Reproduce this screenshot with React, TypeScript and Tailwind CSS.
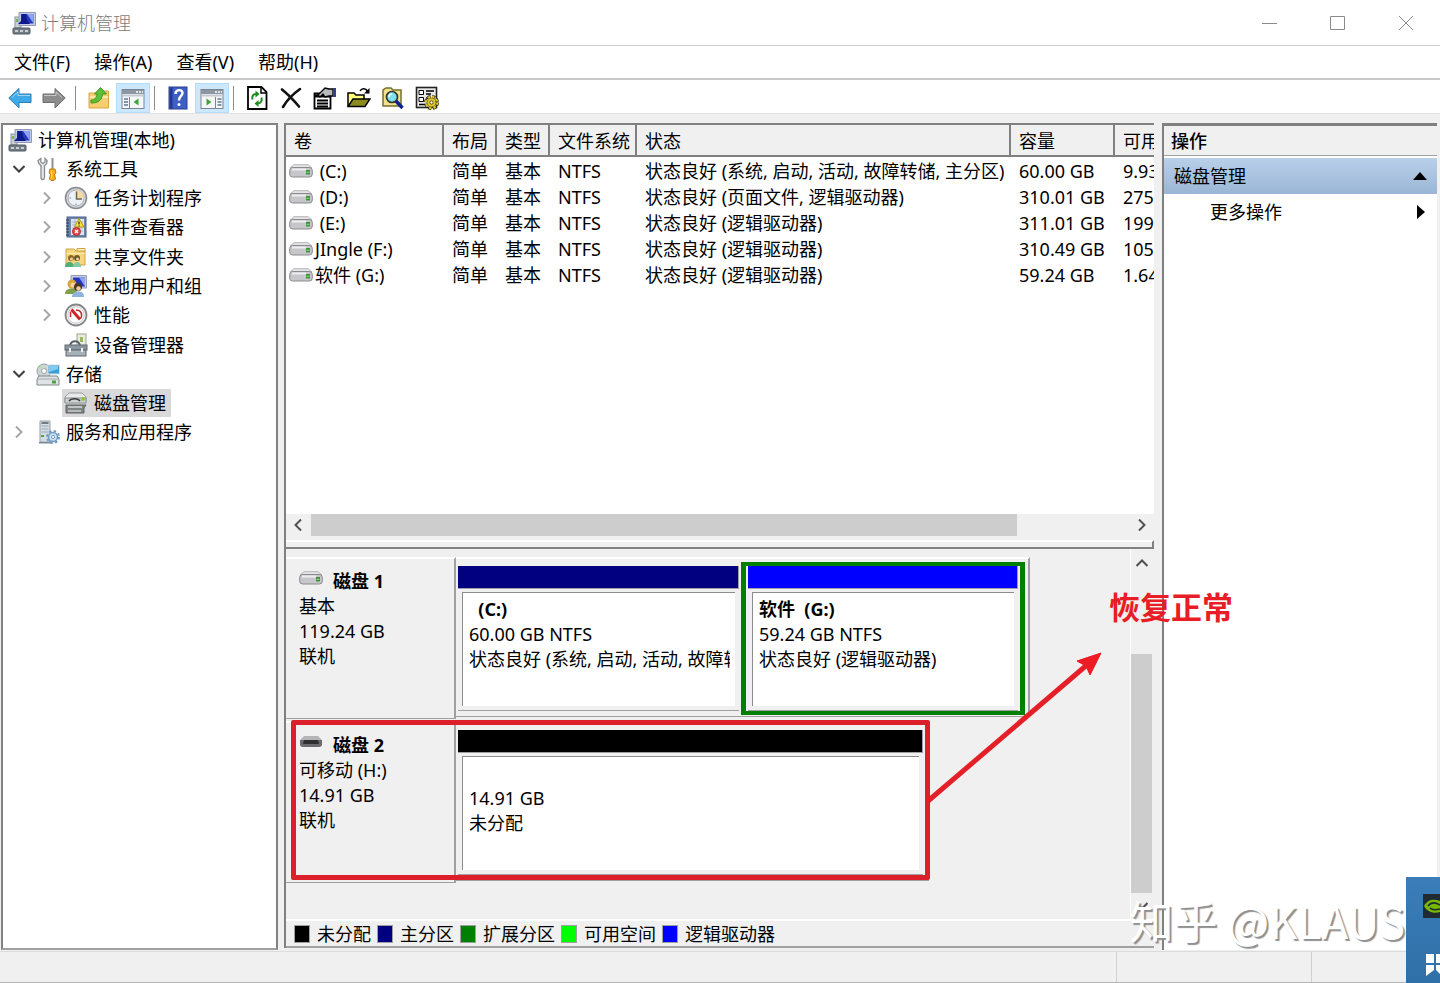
import { ReactNode } from "react";
import clsx from "clsx";

type IconProps = {
    className?: string;
};

type TreeNode = {
    title: string;
    level: 0 | 1 | 2;
    icon: ReactNode;
    open?: boolean;
    leaf?: boolean;
    selected?: boolean;
};

type Volume = {
    name: string;
    layout: string;
    type: string;
    fs: string;
    status: string;
    capacity: string;
    free: string;
};

function ComputerIcon({ className = "size-6" }: IconProps) {
    return (
        <svg viewBox="0 0 24 24" className={className}>
            <rect x="3" y="6" width="6" height="11" fill="#c9d0d8" stroke="#8a939c" />
            <rect x="4" y="8" width="2" height="3" fill="#7db34a" />
            <path d="M7 1.500h16.500v13H7z" fill="#c3cbe0" stroke="#8f9bb5" />
            <path d="M9 3h12.500v9.500H9z" fill="#2537c4" />
            <path d="M15 3h6.500v9.500z" fill="#8fa2ee" />
            <path d="M10 3h4l1 6 3 4H6l3-3z" fill="#0d1a87" />
            <rect x="1" y="17" width="17" height="6" rx="1" fill="#737d85" stroke="#535b62" />
            <path d="M3 19h3v2H3zM8 19h3v2H8zM13 19h3v2h-3z" fill="#c7cdd2" />
        </svg>
    );
}

function ToolsIcon() {
    return (
        <svg viewBox="0 0 24 24" className="size-6">
            <path
                d="M2 3.500C2.300 6.500 3 7.500 5 8.500v12q0 2 1.700 2t1.800-2v-12c2-1 2.700-2.500 2.500-5L9 1.500V5L7 6.500 4.800 5V1.500z"
                fill="#e6e8ea"
                stroke="#878c91"
                strokeWidth="1.300"
            />
            <path d="M16.500 1v12" stroke="#8d9297" strokeWidth="2" />
            <path d="M14 12h5l1 4-1.500 1 1 5-1.500 1.500h-3L13.500 22l1-5-1.500-1z" fill="#f5ae1c" stroke="#c07d06" />
            <path d="M15.500 14v7" stroke="#ffe08a" />
        </svg>
    );
}

function ClockIcon() {
    return (
        <svg viewBox="0 0 24 24" className="size-6">
            <circle cx="12" cy="12" r="10.500" fill="#d4d7dc" stroke="#85898f" strokeWidth="1.500" />
            <circle cx="12" cy="12" r="8" fill="#eef2f8" stroke="#a9afb6" />
            <path d="M12 4a8 8 0 0 1 8 8h-8z" fill="#f5dca4" />
            <path d="M12.500 5.500V13H18" fill="none" stroke="#6b6350" strokeWidth="1.500" />
            <path d="M5.500 12h1.500M12 17.500V19" stroke="#7f858c" />
        </svg>
    );
}

function EventIcon() {
    return (
        <svg viewBox="0 0 24 24" className="size-6">
            <rect x="3" y="2" width="19" height="20" fill="#6d86ab" stroke="#4d6388" />
            <rect x="7" y="4" width="13" height="16" fill="#dce5f0" />
            <path d="M8 7h11M8 10h11M8 13h11M8 16h11M11 4v16" stroke="#a5b5cb" />
            <path d="M2 5h3M2 8h3M2 11h3M2 14h3M2 17h3M2 20h3" stroke="#27364f" />
            <path d="M15 3.500l5 8.500H10.500z" fill="#ffe03e" stroke="#b99a06" />
            <path d="M15 6.500v3M15 10.500v1" stroke="#333" strokeWidth="1.300" />
            <circle cx="12.500" cy="16.500" r="4" fill="#de4a4a" stroke="#b72c2c" />
            <path d="M11 15l3 3M14 15l-3 3" stroke="#fff" strokeWidth="1.300" />
        </svg>
    );
}

function SharedIcon() {
    return (
        <svg viewBox="0 0 24 24" className="size-6">
            <path d="M2 4h8l2 2h9v14H2z" fill="#f7d67c" stroke="#d0a341" />
            <path d="M13 3.500h8V6h-8z" fill="#fff3c4" stroke="#d0a341" />
            <path d="M2.500 8.500h18" stroke="#fdeab3" />
            <circle cx="7" cy="13" r="3" fill="#8a6a2d" />
            <circle cx="13" cy="13" r="3" fill="#6d5426" />
            <circle cx="7.500" cy="14" r="1.500" fill="#f3cf9c" />
            <circle cx="13.500" cy="14" r="1.500" fill="#f3cf9c" />
            <path d="M1 22c0-4 2.500-5 5-5s4 2 4 5z" fill="#4fae77" />
            <path d="M9 22c0-3 2-5 4-5s4 1.500 4 5z" fill="#83c9a6" />
        </svg>
    );
}

function UsersIcon() {
    return (
        <svg viewBox="0 0 24 24" className="size-6">
            <path d="M7 1.500h15.500v12.500H7z" fill="#c6cee0" stroke="#929db6" />
            <path d="M9 3.500h12v9H9z" fill="#2436c0" />
            <path d="M15 3.500h6v9z" fill="#8fa4ee" />
            <circle cx="8" cy="10" r="4.500" fill="#d8a53a" />
            <circle cx="9" cy="11" r="2.500" fill="#f4d4a2" />
            <path d="M1 20c0-4 3-5.500 7-5.500s5 2 5 5.500z" fill="#7ea04b" />
            <circle cx="14" cy="13" r="4" fill="#4a3624" />
            <circle cx="14.500" cy="14.500" r="2.300" fill="#f0cb9c" />
            <path d="M8 23c0-4 3-5.500 6.500-5.500S20 19 20 23z" fill="#8eb4dc" />
        </svg>
    );
}

function PerformanceIcon() {
    return (
        <svg viewBox="0 0 24 24" className="size-6">
            <circle cx="12" cy="12" r="10.500" fill="#fafafa" stroke="#84868a" strokeWidth="1.800" />
            <circle cx="12" cy="12" r="8.200" fill="#fff" stroke="#c4c6c9" />
            <path d="M6.500 14V8.500" fill="none" stroke="#cf2222" strokeWidth="1.500" />
            <path d="M7.500 6.500L16 16.500" stroke="#cf2222" strokeWidth="2.800" />
            <path d="M12 7c5 0 7 4 4.500 9" fill="none" stroke="#cf2222" strokeWidth="1.500" />
        </svg>
    );
}

function DeviceIcon() {
    return (
        <svg viewBox="0 0 24 24" className="size-6">
            <rect x="13" y="1" width="9" height="14" fill="#e9ecdf" stroke="#9fa58f" />
            <rect x="16" y="4" width="3" height="5" fill="#9cb85f" />
            <path d="M6 12c2-5 8-5 10 0" fill="none" stroke="#566069" strokeWidth="2" />
            <rect x="1" y="12" width="22" height="5" fill="#8c969f" stroke="#5e6870" />
            <rect x="2" y="17" width="20" height="6" fill="#a8b0b8" stroke="#5e6870" />
            <path d="M6 15v4M18 15v4" stroke="#eef0f2" strokeWidth="2" />
        </svg>
    );
}

function StorageIcon() {
    return (
        <svg viewBox="0 0 24 24" className="size-6">
            <circle cx="8" cy="9" r="7" fill="#cfd4d6" stroke="#969da1" />
            <circle cx="8" cy="9" r="2.500" fill="#fff" stroke="#9aa1a5" />
            <path d="M4 4l3 3" stroke="#b9e0a2" strokeWidth="2" />
            <rect x="12" y="3" width="11.500" height="9" fill="#3d9ed6" stroke="#d9dfe3" />
            <path d="M13 4h9v3l-9 3z" fill="#82cbee" />
            <path d="M3 14h18l2 3v6H1v-6z" fill="#dfe3e5" stroke="#7f878b" />
            <path d="M1 17h22" stroke="#9fa6aa" />
            <rect x="16" y="18.500" width="4" height="3" fill="#4ba33b" />
        </svg>
    );
}

function DiskManageIcon() {
    return (
        <svg viewBox="0 0 24 24" className="size-6">
            <path d="M5 2h13l4 4v5H1V6z" fill="#e8eaea" stroke="#9b9f9f" />
            <path d="M1 7h21v5H1z" fill="#cfd2d2" stroke="#8b8f8f" />
            <path d="M5 10c2-3 9-3 11 0" fill="none" stroke="#3a3d3d" strokeWidth="1.500" />
            <circle cx="19" cy="8" r="2" fill="#8fc43f" />
            <path d="M2 14h20l-2 3v5H2z" fill="#7f8484" stroke="#5d6161" />
            <path d="M4 16h14" stroke="#d7dada" strokeWidth="1.500" />
            <rect x="4" y="19" width="13" height="2" fill="#b7bbbb" />
        </svg>
    );
}

function ServiceIcon() {
    return (
        <svg viewBox="0 0 24 24" className="size-6">
            <path d="M4 1h10v21H4z" fill="#d5dde4" stroke="#93a0ab" />
            <path d="M5.500 3h7" stroke="#4f5b66" strokeWidth="1.500" />
            <path d="M5.500 6h7M5.500 9h7M5.500 12h7" stroke="#9aa7b2" />
            <rect x="5" y="15" width="3" height="2" fill="#56a04c" />
            <path d="M3 22h12v1.500H3z" fill="#7d8a95" />
            <circle cx="17" cy="17" r="4.500" fill="#cfe0ef" stroke="#6f9cc4" strokeWidth="1.500" />
            <circle cx="17" cy="17" r="6" fill="none" stroke="#6f9cc4" strokeWidth="2" strokeDasharray="2.400 2.312" />
            <circle cx="17" cy="17" r="1.600" fill="#fff" stroke="#6f9cc4" />
        </svg>
    );
}

function DriveIcon() {
    return (
        <svg viewBox="0 0 24 14" className="h-[14px] w-6 shrink-0">
            <path d="M5 .7h14l4 3.300H1z" fill="#e4e4e6" stroke="#b5b5b8" />
            <rect x=".7" y="3.500" width="22.600" height="9.500" rx="3" fill="#c7c7cb" stroke="#8a8a8e" />
            <path d="M3 5.500h14" stroke="#ededf0" strokeWidth="2" />
            <rect x="17" y="6" width="4" height="4.500" fill="#3f9142" />
            <path d="M17.500 8.300h3" stroke="#9bdc8c" />
        </svg>
    );
}

function RemovableIcon() {
    return (
        <svg viewBox="0 0 24 14" className="h-[14px] w-6 shrink-0">
            <path d="M5 1h14l4 4v4q0 2-2 2H3q-2 0-2-2V5z" fill="#b5b5b7" />
            <path d="M1 5h22v4q0 3-3 3H4q-3 0-3-3z" fill="#6b6b6e" />
            <path d="M5 5h14l1 4H4z" fill="#2f2f31" />
        </svg>
    );
}

function ArrowIcon({ fill, stroke, flip }: { fill: string; stroke: string; flip?: boolean }) {
    return (
        <svg viewBox="0 0 24 24" className={clsx("size-6", flip && "-scale-x-100")}>
            <path d="M.8 12L11 2.500V8h12v8.500H11V22z" fill={fill} stroke={stroke} />
            <path d="M4 11.500L10 6v3.500h12" fill="none" stroke="#fff" strokeOpacity=".5" />
        </svg>
    );
}

function UpFolderIcon() {
    return (
        <svg viewBox="0 0 24 24" className="size-6">
            <path d="M2 7h8l2-2h9.500v17H2z" fill="#f6cd70" stroke="#dca544" />
            <path d="M3 11h18" stroke="#fde7ae" strokeWidth="2" />
            <path d="M4 14c4 0 5.500-2.500 6-6H7.500l6-6.500 6 6.500h-4c-.5 6-4 9-11.500 9z" fill="#5cbf3a" stroke="#3d9722" />
        </svg>
    );
}

function PaneIcon({ right }: { right?: boolean }) {
    return (
        <svg viewBox="0 0 24 24" className="size-6">
            <rect x="1" y="3.500" width="22" height="19" fill="#f5f6f7" stroke="#7b858f" />
            <path d="M1 4h22v4H1z" fill="#8d97a1" />
            <path d="M15 6h2M18 6h2M21 6h1" stroke="#fff" strokeWidth="1.500" />
            <path d="M1.500 9.500h21" stroke="#c5cad0" strokeWidth="2" />
            {right ? (
                <>
                    <path d="M15.500 11v11" stroke="#7b858f" />
                    <path d="M17.500 13h4M17.500 16h4M17.500 19h4" stroke="#5b7896" strokeWidth="1.500" />
                    <path d="M6.500 12.500v7l5-3.500z" fill="#3ea33a" />
                </>
            ) : (
                <>
                    <path d="M8.500 11v11" stroke="#7b858f" />
                    <path d="M3 13h4M3 16h4M3 19h4" stroke="#5b7896" strokeWidth="1.500" />
                    <path d="M17.500 12.500v7l-5-3.500z" fill="#3ea33a" />
                </>
            )}
        </svg>
    );
}

function HelpIcon() {
    return (
        <svg viewBox="0 0 24 24" className="size-6">
            <rect x="3" y="1" width="18" height="22" fill="#3f5fc4" stroke="#2a3f8f" />
            <path d="M4 1.500h2.500v21H4z" fill="#24398d" />
            <path
                d="M9.500 8c0-5 7-5 7-1 0 3-3.500 3-3.500 7.500"
                fill="none"
                stroke="#fff"
                strokeWidth="2.400"
            />
            <circle cx="13" cy="18.500" r="1.500" fill="#fff" />
        </svg>
    );
}

function RefreshIcon() {
    return (
        <svg viewBox="0 0 24 24" className="size-6">
            <path d="M3 1h13.500L21.500 6v17H3z" fill="#fff" stroke="#000" strokeWidth="1.800" />
            <path d="M16 1v6h5.500" fill="none" stroke="#000" strokeWidth="1.500" />
            <path d="M7.500 13.500c-1-3.500 1-5.500 3.500-5.500" fill="none" stroke="#1c8a1c" strokeWidth="2" />
            <path d="M10.500 4.500l4 3.500-4 3.500z" fill="#1c8a1c" />
            <path d="M16.500 11.500c1 3.500-1 6-3.500 6" fill="none" stroke="#1c8a1c" strokeWidth="2" />
            <path d="M13.500 14l-4 3.500 4 3.500z" fill="#1c8a1c" />
        </svg>
    );
}

function DeleteIcon() {
    return (
        <svg viewBox="0 0 24 24" className="size-6">
            <path d="M3 3.500c5 4 11 10 17 17M21 3C14 8 8 14 4 21" fill="none" stroke="#111" strokeWidth="2.600" strokeLinecap="round" />
        </svg>
    );
}

function PropertiesIcon() {
    return (
        <svg viewBox="0 0 24 24" className="size-6">
            <path d="M1.500 7.500h16v15h-16z" fill="#fff" stroke="#000" strokeWidth="1.800" />
            <path d="M2 8.500h15v3H2z" fill="#000" />
            <path d="M4 14.500h11M4 17.500h11M4 20.500h11" stroke="#000" strokeWidth="2" />
            <path d="M5 9l7-7 4 1h4v7h-4l-4 1-2-3-3 3z" fill="#b9b9bd" stroke="#000" strokeWidth="1.300" />
            <path d="M20 2h3v9h-3z" fill="#36408d" />
        </svg>
    );
}

function OpenIcon() {
    return (
        <svg viewBox="0 0 24 24" className="size-6">
            <path d="M1 20V7h6l2 2h8v4" fill="#ffff7a" stroke="#000" strokeWidth="1.500" />
            <path d="M1 20.500L6 13h17l-5 7.500z" fill="#8b8a1c" stroke="#000" strokeWidth="1.500" />
            <path d="M13 5c2-3.500 6-3 8 1" fill="none" stroke="#000" strokeWidth="1.500" />
            <path d="M22.500 2v5.500H17z" fill="#000" />
        </svg>
    );
}

function FindIcon() {
    return (
        <svg viewBox="0 0 24 24" className="size-6">
            <path d="M2 20V4l3-2h5l2 2h8v16z" fill="#efe28b" stroke="#77702c" strokeWidth="1.500" />
            <circle cx="11" cy="11" r="5.500" fill="#7fe3ee" stroke="#333" strokeWidth="1.700" />
            <path d="M8 11c0-2 1-3 3-3" fill="none" stroke="#fff" strokeWidth="1.500" />
            <path d="M15 15l6.500 7" stroke="#10208e" strokeWidth="3.500" />
        </svg>
    );
}

function SettingsIcon() {
    return (
        <svg viewBox="0 0 24 24" className="size-6">
            <rect x="1.500" y="1.500" width="20" height="20" fill="#e9e9e9" stroke="#222" strokeWidth="1.600" />
            <path d="M4 4.500h4.500v4H4zM4 11.500h4.500v4H4z" fill="#fff" stroke="#000" />
            <path d="M11 5h8M11 8h5M4 18.500h6M11 12h3" stroke="#000" strokeWidth="1.700" />
            <circle cx="16.500" cy="16.500" r="5.500" fill="none" stroke="#2b2600" strokeWidth="4" strokeDasharray="2.700 1.620" />
            <circle cx="16.500" cy="16.500" r="5.500" fill="none" stroke="#e2cd2c" strokeWidth="2.500" strokeDasharray="2.200 2.120" />
            <circle cx="16.500" cy="16.500" r="4.500" fill="#e2cd2c" stroke="#4c4300" strokeWidth=".6" />
            <circle cx="16.500" cy="16.500" r="1.700" fill="#fff" stroke="#4c4300" />
        </svg>
    );
}

function Chevron({ className }: { className: string }) {
    return (
        <svg viewBox="0 0 12 12" className={clsx("size-3 shrink-0 fill-none stroke-2", className)}>
            <path d="M3 .5L8.500 6 3 11.500" />
        </svg>
    );
}

const menus = ["文件(F)", "操作(A)", "查看(V)", "帮助(H)"];

const tree: TreeNode[] = [
    { title: "计算机管理(本地)", level: 0, icon: <ComputerIcon />, leaf: true },
    { title: "系统工具", level: 1, icon: <ToolsIcon />, open: true },
    { title: "任务计划程序", level: 2, icon: <ClockIcon /> },
    { title: "事件查看器", level: 2, icon: <EventIcon /> },
    { title: "共享文件夹", level: 2, icon: <SharedIcon /> },
    { title: "本地用户和组", level: 2, icon: <UsersIcon /> },
    { title: "性能", level: 2, icon: <PerformanceIcon /> },
    { title: "设备管理器", level: 2, icon: <DeviceIcon />, leaf: true },
    { title: "存储", level: 1, icon: <StorageIcon />, open: true },
    { title: "磁盘管理", level: 2, icon: <DiskManageIcon />, leaf: true, selected: true },
    { title: "服务和应用程序", level: 1, icon: <ServiceIcon /> }
];

const volumes: Volume[] = [
    {
        name: " (C:)",
        layout: "简单",
        type: "基本",
        fs: "NTFS",
        status: "状态良好 (系统, 启动, 活动, 故障转储, 主分区)",
        capacity: "60.00 GB",
        free: "9.93"
    },
    {
        name: " (D:)",
        layout: "简单",
        type: "基本",
        fs: "NTFS",
        status: "状态良好 (页面文件, 逻辑驱动器)",
        capacity: "310.01 GB",
        free: "275"
    },
    {
        name: " (E:)",
        layout: "简单",
        type: "基本",
        fs: "NTFS",
        status: "状态良好 (逻辑驱动器)",
        capacity: "311.01 GB",
        free: "199"
    },
    {
        name: "JIngle (F:)",
        layout: "简单",
        type: "基本",
        fs: "NTFS",
        status: "状态良好 (逻辑驱动器)",
        capacity: "310.49 GB",
        free: "105"
    },
    {
        name: "软件 (G:)",
        layout: "简单",
        type: "基本",
        fs: "NTFS",
        status: "状态良好 (逻辑驱动器)",
        capacity: "59.24 GB",
        free: "1.64"
    }
];

const columns = [
    { title: "卷", width: "w-[157px]" },
    { title: "布局", width: "w-[53px]" },
    { title: "类型", width: "w-[53px]" },
    { title: "文件系统", width: "w-[87px]" },
    { title: "状态", width: "w-[374px]" },
    { title: "容量", width: "w-[104px]" },
    { title: "可用", width: "w-[60px]" }
];

const legend = [
    { title: "未分配", color: "bg-black" },
    { title: "主分区", color: "bg-[#000080]" },
    { title: "扩展分区", color: "bg-[#008000]" },
    { title: "可用空间", color: "bg-[#00ff00]" },
    { title: "逻辑驱动器", color: "bg-[#0000ff]" }
];

function ToolButton({ label, active, children }: { label: string; active?: boolean; children: ReactNode }) {
    return (
        <button
            type="button"
            aria-label={label}
            className={clsx(
                "flex h-[30px] w-[34px] items-center justify-center",
                active && "border border-[#b5dcf8] bg-[#cce8ff]"
            )}
        >
            {children}
        </button>
    );
}

function ToolSeparator() {
    return <div className="mr-1.5 mb-[3px] ml-1 h-6 w-px bg-[#8c8c8c]"></div>;
}

function TitleBar() {
    return (
        <header className="flex h-[46px] shrink-0 items-center border-b border-[#cfcfcf] bg-white pl-3">
            <ComputerIcon />
            <h1 className="ml-[5px] font-light text-[#7c7c7c]">计算机管理</h1>
            <div className="ml-auto flex">
                <button type="button" aria-label="最小化" className="flex h-11 w-[68px] items-center justify-center">
                    <svg viewBox="0 0 16 16" className="size-4 stroke-[#8a8a8a]">
                        <path d="M0 8.500h15" />
                    </svg>
                </button>
                <button type="button" aria-label="最大化" className="flex h-11 w-[68px] items-center justify-center">
                    <svg viewBox="0 0 16 16" className="size-4 fill-none stroke-[#8a8a8a]">
                        <path d="M.5 1.500h14v13H.5z" />
                    </svg>
                </button>
                <button type="button" aria-label="关闭" className="flex h-11 w-[68px] items-center justify-center">
                    <svg viewBox="0 0 16 16" className="size-4 stroke-[#8a8a8a]">
                        <path d="M1 1l14 14M15 1L1 15" />
                    </svg>
                </button>
            </div>
        </header>
    );
}

function Toolbar() {
    return (
        <div className="flex h-[34px] shrink-0 items-end border-b border-[#e4e4e4] bg-white pl-[3px]">
            <ToolButton label="后退">
                <ArrowIcon fill="#3fa9e8" stroke="#2a7fb8" />
            </ToolButton>
            <ToolButton label="前进">
                <ArrowIcon fill="#8d8d8d" stroke="#6c6c6c" flip />
            </ToolButton>
            <ToolSeparator />
            <ToolButton label="向上">
                <UpFolderIcon />
            </ToolButton>
            <ToolButton label="显示控制台树" active>
                <PaneIcon />
            </ToolButton>
            <ToolSeparator />
            <ToolButton label="帮助">
                <HelpIcon />
            </ToolButton>
            <ToolButton label="显示操作窗格" active>
                <PaneIcon right />
            </ToolButton>
            <ToolSeparator />
            <ToolButton label="刷新">
                <RefreshIcon />
            </ToolButton>
            <ToolButton label="删除">
                <DeleteIcon />
            </ToolButton>
            <ToolButton label="属性">
                <PropertiesIcon />
            </ToolButton>
            <ToolButton label="打开">
                <OpenIcon />
            </ToolButton>
            <ToolButton label="查找">
                <FindIcon />
            </ToolButton>
            <ToolButton label="设置">
                <SettingsIcon />
            </ToolButton>
        </div>
    );
}

function ConsoleTree() {
    return (
        <nav className="w-[277px] shrink-0 border-2 border-[#828282] border-b-[#a0a0a0] bg-white">
            <ul className="grid h-[322px] grid-rows-11">
                {tree.map((node) => (
                    <li
                        key={node.title}
                        className={clsx(
                            "flex items-center",
                            node.level === 0 && "pl-[3px]",
                            node.level === 1 && "pl-[10px]",
                            node.level === 2 && "pl-[38px]"
                        )}
                    >
                        {node.level > 0 && (
                            <span className="mr-[9px] flex w-3 shrink-0">
                                {!node.leaf && (
                                    <Chevron className={node.open ? "rotate-90 stroke-[#404040]" : "stroke-[#a6a6a6]"} />
                                )}
                            </span>
                        )}
                        <button
                            type="button"
                            className={clsx(
                                "flex h-7 items-center gap-[6px] pr-[5px] pl-0.5 whitespace-nowrap",
                                node.selected && "bg-[#d9d9d9]"
                            )}
                        >
                            {node.icon}
                            {node.title}
                        </button>
                    </li>
                ))}
            </ul>
        </nav>
    );
}

function VolumeTable() {
    return (
        <div className="h-[389px] shrink-0 overflow-hidden bg-white">
            <table className="w-[888px] table-fixed border-collapse text-left">
                <thead>
                    <tr className="h-[31px] bg-[#f0f0f0]">
                        {columns.map((col) => (
                            <th
                                key={col.title}
                                className={clsx(
                                    "border-r-2 border-b-2 border-[#808080] p-0 pt-0.5 pl-2 font-normal whitespace-nowrap",
                                    col.width
                                )}
                            >
                                {col.title}
                            </th>
                        ))}
                    </tr>
                </thead>
                <tbody>
                    {volumes.map((item) => (
                        <tr key={item.name} className="h-[26px] whitespace-nowrap">
                            <td className="p-0 pt-0.5 pl-[3px]">
                                <span className="flex items-center gap-0.5 whitespace-pre">
                                    <DriveIcon />
                                    {item.name}
                                </span>
                            </td>
                            <td className="p-0 pt-0.5 pl-[9px]">{item.layout}</td>
                            <td className="p-0 pt-0.5 pl-[9px]">{item.type}</td>
                            <td className="p-0 pt-0.5 pl-[9px]">{item.fs}</td>
                            <td className="p-0 pt-0.5 pl-[9px]">{item.status}</td>
                            <td className="p-0 pt-0.5 pl-[9px]">{item.capacity}</td>
                            <td className="p-0 pt-0.5 pl-[9px]">{item.free}</td>
                        </tr>
                    ))}
                </tbody>
            </table>
        </div>
    );
}

function DiskLabel({ icon, title, lines }: { icon: ReactNode; title: string; lines: string[] }) {
    return (
        <div className="w-[170px] shrink-0 border-r-2 border-b border-t-2 border-t-white border-r-[#a0a0a0] border-b-[#a0a0a0] pt-[10px] pl-[13px] leading-[25px]">
            <div className="flex items-start gap-[10px] font-bold">
                <span className="pt-0.5">{icon}</span>
                {title}
            </div>
            {lines.map((line) => (
                <div key={line}>{line}</div>
            ))}
        </div>
    );
}

function Partition({ color, width, children }: { color: string; width: string; children: ReactNode }) {
    return (
        <div className={clsx("flex h-[145px] flex-col border-b border-[#a0a0a0]", width)}>
            <div className={clsx("h-[23px] border-r border-b border-[#a0a0a0]", color)}></div>
            <div className="mt-[3px] mr-1 mb-1 ml-1 flex flex-1 flex-col border-t border-l border-[#8c8c8c] bg-white pt-1 pl-[6px] leading-[25px]">
                <div className="mr-[5px] overflow-hidden whitespace-pre">{children}</div>
            </div>
        </div>
    );
}

function DiskMap() {
    return (
        <div className="flex-1 pt-2">
            <div className="flex h-[162px]">
                <DiskLabel icon={<DriveIcon />} title="磁盘 1" lines={["基本", "119.24 GB", "联机"]} />
                <div className="flex h-[160px] items-start border-t-2 border-r-2 border-b border-t-white border-r-[#a0a0a0] border-b-[#a0a0a0] pr-[3px]">
                    <div className="pt-[7px] pl-0.5">
                        <Partition color="bg-[#000080]" width="w-[281px]">
                            <b>{"  (C:)"}</b>
                            <br />
                            60.00 GB NTFS
                            <br />
                            状态良好 (系统, 启动, 活动, 故障转
                        </Partition>
                    </div>
                    <div className="mt-[3px] ml-0.5 border-[5px] border-t-4 border-b-4 border-[#008000] pr-0.5 pl-0.5">
                        <Partition color="bg-[#0000ff]" width="w-[270px]">
                            <b>{"软件  (G:)"}</b>
                            <br />
                            59.24 GB NTFS
                            <br />
                            状态良好 (逻辑驱动器)
                        </Partition>
                    </div>
                </div>
            </div>
            <div className="flex h-[164px] pt-0.5">
                <DiskLabel icon={<RemovableIcon />} title="磁盘 2" lines={["可移动 (H:)", "14.91 GB", "联机"]} />
                <div className="h-[160px] border-t-2 border-r border-b border-t-white border-r-[#a0a0a0] border-b-[#a0a0a0] pt-[7px] pr-[5px] pl-0.5">
                    <Partition color="bg-black" width="w-[465px]">
                        <br />
                        14.91 GB
                        <br />
                        未分配
                    </Partition>
                </div>
            </div>
        </div>
    );
}

function ActionsPane() {
    return (
        <aside className="w-[275px] shrink-0 border-t-[3px] border-l-2 border-[#808080] bg-white">
            <h2 className="flex h-[30px] items-center border-b border-[#a0a0a0] bg-[#f0f0f0] pl-[7px] font-medium">操作</h2>
            <button
                type="button"
                className="mt-0.5 flex h-9 w-full items-center justify-between bg-linear-to-b from-[#b9d0e9] to-[#9ab5d5] pr-[10px] pl-[10px]"
            >
                磁盘管理
                <svg viewBox="0 0 14 8" className="h-2 w-[14px]">
                    <path d="M0 8l7-8 7 8z" />
                </svg>
            </button>
            <button type="button" className="flex h-9 w-full items-center justify-between pr-3 pl-[46px]">
                更多操作
                <svg viewBox="0 0 8 14" className="h-[14px] w-2">
                    <path d="M0 0l8 7-8 7z" />
                </svg>
            </button>
        </aside>
    );
}

function Annotations() {
    return (
        <>
            <div className="pointer-events-none absolute top-[720px] left-[291px] h-[160px] w-[639px] rounded-xs border-5 border-[#dc1f29]"></div>
            <svg viewBox="0 0 180 156" className="pointer-events-none absolute top-[650px] left-[924px] h-[156px] w-[180px]">
                <path d="M4 151L164 14" stroke="#e51f28" strokeWidth="5" />
                <path d="M177 3L166 25l-4-9-9-5z" fill="#ee1c24" stroke="#ee1c24" />
                <path d="M177 3L153 11l9 5 4 9z" fill="#ee1c24" />
            </svg>
            <p className="pointer-events-none absolute top-[588px] left-[1109px] text-[31px] leading-[38px] font-bold whitespace-nowrap text-[#e81d26]">
                恢复正常
            </p>
            <p className="pointer-events-none absolute right-[35px] bottom-[38px] text-[44px] leading-[50px] whitespace-nowrap text-white [font-family:'Noto_Sans_CJK_SC',sans-serif] [text-shadow:2px_2px_1px_#8f8f8f]">
                知乎 @KLAUS
            </p>
            <div className="absolute right-0 bottom-0 h-[106px] w-[34px] overflow-hidden bg-linear-to-b from-[#3a7db8] to-[#2f70a8]">
                <svg viewBox="0 0 34 106" className="h-[106px] w-[34px]">
                    <rect x="17" y="17" width="20" height="24" fill="#1f2a33" />
                    <path d="M18 29c4-7 10-7 16-5v11c-6 2-13 0-16-6z" fill="#76b900" />
                    <path d="M22 29c3-4 7-4 12-1M24 31c2 2 6 2 10 1" fill="none" stroke="#1f2a33" strokeWidth="1.500" />
                    <path d="M20 77h8v9h-8zM30 77h6v9h-6zM20 88h8v5l-8 6zM30 88h6v11l-6-6z" fill="#fff" />
                </svg>
            </div>
        </>
    );
}

export default function App() {
    return (
        <div className="relative flex h-screen min-h-[960px] flex-col overflow-hidden bg-[#f0f0f0] text-[18px] leading-6 text-black [font-family:'Noto_Sans','Noto_Sans_CJK_SC',sans-serif]">
            <TitleBar />
            <div className="flex h-[34px] shrink-0 items-center gap-6 border-b-2 border-[#c9c9c9] bg-white pl-[14px]">
                {menus.map((menu) => (
                    <button type="button" key={menu}>
                        {menu}
                    </button>
                ))}
            </div>
            <Toolbar />
            <main className="flex min-h-0 flex-1 pt-[9px] pr-[3px] pl-px">
                <ConsoleTree />
                <section className="mr-2 mb-0.5 ml-[6px] flex min-w-0 flex-1 flex-col overflow-hidden border-t-2 border-l-2 border-[#808080]">
                    <VolumeTable />
                    <div className="flex h-[22px] shrink-0 items-center justify-between pr-[6px] pl-[6px]">
                        <Chevron className="rotate-180 stroke-[#505050]" />
                        <div className="mr-[119px] ml-[7px] h-full flex-1 bg-[#cdcdcd]"></div>
                        <Chevron className="stroke-[#505050]" />
                    </div>
                    <div className="h-[13px] shrink-0 pt-1">
                        <div className="h-[9px] border-t-2 border-r-2 border-b-2 border-[#808080] border-t-white"></div>
                    </div>
                    <div className="flex min-h-0 flex-1">
                        <DiskMap />
                        <div className="mr-0.5 flex w-[22px] flex-col items-center border-l border-white pt-2 pb-[7px]">
                            <Chevron className="-rotate-90 stroke-[#505050]" />
                            <div className="mt-[85px] mb-[7px] w-full flex-1 bg-[#cdcdcd]"></div>
                            <Chevron className="rotate-90 stroke-[#505050]" />
                        </div>
                    </div>
                    <ul className="flex h-[29px] shrink-0 items-center gap-[6px] border-t-2 border-b-2 border-t-white border-b-[#a0a0a0] pl-2">
                        {legend.map((item) => (
                            <li key={item.title} className="flex items-center gap-[7px]">
                                <span className={clsx("h-[18px] w-4 border border-[#a0a0a0]", item.color)}></span>
                                {item.title}
                            </li>
                        ))}
                    </ul>
                </section>
                <ActionsPane />
            </main>
            <footer className="mt-px flex h-8 shrink-0 justify-end border-t border-b border-t-[#dcdcdc] border-b-[#b5b5b5]">
                <div className="w-[195px] border-l border-[#d0d0d0]"></div>
                <div className="w-[129px] border-l border-[#d0d0d0]"></div>
            </footer>
            <Annotations />
        </div>
    );
}
